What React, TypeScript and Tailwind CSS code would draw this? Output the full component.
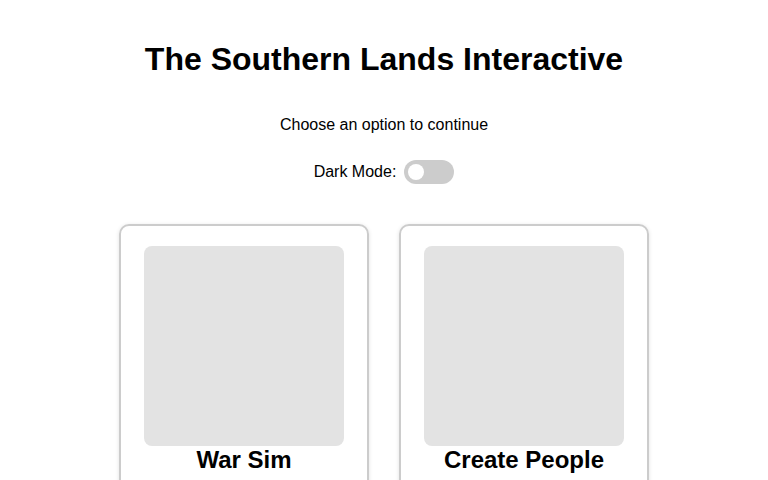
import React, { useState } from "react";

const cards = ["War Sim", "Create People"];

export default function App() {
  const [dark, setDark] = useState(false);
  return (
    <div
      className="min-h-screen bg-white text-black"
      style={{ fontFamily: '"Liberation Sans", Arial, sans-serif' }}
    >
      <div className="flex flex-col items-center pt-[41px]">
        <h1 className="text-[32px] font-bold leading-[37px]">The Southern Lands Interactive</h1>
        <p className="mt-[38px] text-[16px] leading-[18px]">Choose an option to continue</p>
        <div className="mt-[26px] flex items-center gap-[8px]">
          <span className="text-[16px] leading-[18px]">Dark Mode:</span>
          <button
            onClick={() => setDark(!dark)}
            className="relative h-[24px] w-[50px] rounded-full bg-[#cccccc]"
          >
            <span className="absolute left-[4px] top-[4px] h-[16px] w-[16px] rounded-full bg-white" />
          </button>
        </div>
        <div className="mt-[40px] flex gap-[30px]">
          {cards.map((c) => (
            <div
              key={c}
              className="flex w-[250px] flex-col items-center rounded-[10px] border-2 border-[#cccccc] p-[20px] shadow-[0_1px_4px_rgba(0,0,0,0.12)]"
            >
              <div className="h-[200px] w-[200px] rounded-[8px] bg-[#e3e3e3]" />
              <h3 className="text-[24px] font-bold leading-[28px]">{c}</h3>
            </div>
          ))}
        </div>
      </div>
    </div>
  );
}
